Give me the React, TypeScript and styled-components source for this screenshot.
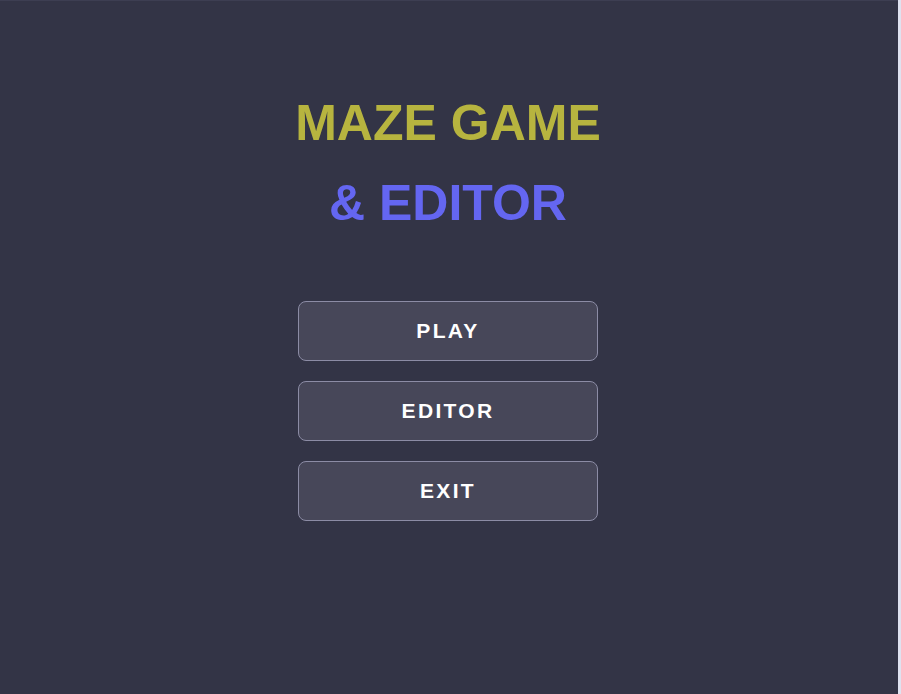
import React from 'react';
import styled, { createGlobalStyle } from 'styled-components';

const GlobalStyle = createGlobalStyle`
  html, body {
    margin: 0;
    padding: 0;
    background: #dfe2f0;
  }
  body {
    font-family: "Liberation Sans", Arial, sans-serif;
  }
`;

const MENU_ITEMS = ['PLAY', 'EDITOR', 'EXIT'];

export default function App() {
  return (
    <>
      <GlobalStyle />
      <Screen>
        <Title>
          <TitleLine color="#b7b43f">MAZE GAME</TitleLine>
          <TitleLine color="#6466f1">&amp; EDITOR</TitleLine>
        </Title>
        <Menu>
          {MENU_ITEMS.map((item) => (
            <MenuButton key={item}>{item}</MenuButton>
          ))}
        </Menu>
      </Screen>
    </>
  );
}

const Screen = styled.div`
  box-sizing: border-box;
  width: 898px;
  height: 694px;
  background: #333446;
  border-top: 1px solid #3d3e52;
  display: flex;
  flex-direction: column;
  align-items: center;
  padding: 82px 2px 0 0;
`;

const Title = styled.h1`
  margin: 0 0 58px;
  display: flex;
  flex-direction: column;
  align-items: center;
  font-size: 50px;
  font-weight: bold;
`;

const TitleLine = styled.span<{ color: string }>`
  display: block;
  line-height: 80px;
  color: ${(p) => p.color};
`;

const Menu = styled.div`
  display: flex;
  flex-direction: column;
  gap: 20px;
`;

const MenuButton = styled.button`
  box-sizing: border-box;
  width: 300px;
  height: 60px;
  background: #474759;
  border: 1px solid #8c8ca5;
  border-radius: 8px;
  color: #ffffff;
  font-family: "Liberation Sans", Arial, sans-serif;
  font-size: 21px;
  font-weight: bold;
  letter-spacing: 2.3px;
  cursor: pointer;
`;
